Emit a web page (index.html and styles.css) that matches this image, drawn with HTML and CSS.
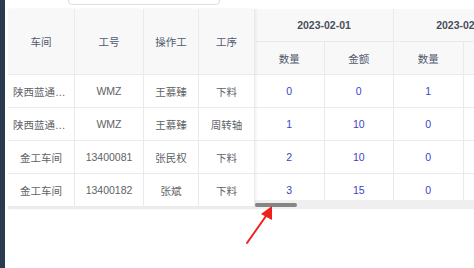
FILE: index.html
```html
<!DOCTYPE html>
<html lang="zh-CN">
<head>
    <meta charset="UTF-8">
    <title>车间产量统计</title>
    <link rel="stylesheet" href="styles.css">
</head>
<body>
    <div class="page">
        <aside class="side"></aside>
        <main class="main">
            <div class="toolbar"><div class="search"></div></div>
            <div class="grid">
                <div class="fixed">
                    <table class="tbl">
                        <colgroup><col style="width:67px"><col style="width:69px"><col style="width:55px"><col style="width:55px"></colgroup>
                        <thead>
                            <tr><th class="tall">车间</th><th class="tall">工号</th><th class="tall">操作工</th><th class="tall">工序</th></tr>
                        </thead>
                        <tbody>
                            <tr><td class="ellipsis">陕西蓝通运输</td><td>WMZ</td><td>王慕臻</td><td>下料</td></tr>
                            <tr><td class="ellipsis">陕西蓝通运输</td><td>WMZ</td><td>王慕臻</td><td>周转轴</td></tr>
                            <tr><td>金工车间</td><td>13400081</td><td>张民权</td><td>下料</td></tr>
                            <tr><td>金工车间</td><td>13400182</td><td>张斌</td><td>下料</td></tr>
                        </tbody>
                    </table>
                </div>
                <div class="scroll">
                    <div class="scroll-body">
                        <table class="tbl wide">
                            <thead>
                                <tr>
                                    <th colspan="2" class="date">2023-02-01</th>
                                    <th colspan="2" class="date">2023-02-02</th>
                                    <th colspan="2" class="date">2023-02-03</th>
                                    <th colspan="2" class="date">2023-02-04</th>
                                    <th colspan="2" class="date">2023-02-05</th>
                                    <th colspan="2" class="date">2023-02-06</th>
                                    <th colspan="2" class="date">2023-02-07</th>
                                    <th colspan="2" class="date">2023-02-08</th>
                                </tr>
                                <tr>
                                    <th>数量</th><th>金额</th><th>数量</th><th>金额</th>
                                    <th>数量</th><th>金额</th><th>数量</th><th>金额</th>
                                    <th>数量</th><th>金额</th><th>数量</th><th>金额</th>
                                    <th>数量</th><th>金额</th><th>数量</th><th>金额</th>
                                </tr>
                            </thead>
                            <tbody>
                                <tr class="num"><td>0</td><td>0</td><td>1</td><td>5</td><td>0</td><td>0</td><td>0</td><td>0</td><td>0</td><td>0</td><td>0</td><td>0</td><td>0</td><td>0</td><td>0</td><td>0</td></tr>
                                <tr class="num"><td>1</td><td>10</td><td>0</td><td>0</td><td>0</td><td>0</td><td>0</td><td>0</td><td>0</td><td>0</td><td>0</td><td>0</td><td>0</td><td>0</td><td>0</td><td>0</td></tr>
                                <tr class="num"><td>2</td><td>10</td><td>0</td><td>0</td><td>0</td><td>0</td><td>0</td><td>0</td><td>0</td><td>0</td><td>0</td><td>0</td><td>0</td><td>0</td><td>0</td><td>0</td></tr>
                                <tr class="num"><td>3</td><td>15</td><td>0</td><td>0</td><td>0</td><td>0</td><td>0</td><td>0</td><td>0</td><td>0</td><td>0</td><td>0</td><td>0</td><td>0</td><td>0</td><td>0</td></tr>
                            </tbody>
                        </table>
                    </div>
                    <div class="scrollbar"><div class="thumb"></div></div>
                </div>
            </div>
            <svg class="arrow" width="40" height="50" viewBox="0 0 40 50">
                <line x1="6" y1="40" x2="25" y2="13" stroke="#f0201a" stroke-width="2" stroke-linecap="round"/>
                <polygon points="31,3 31,17 20,11" fill="#f0201a"/>
            </svg>
        </main>
    </div>
</body>
</html>
```

FILE: styles.css
```css
body {
    margin: 0;
    font-family: "Liberation Sans", "Noto Sans CJK SC", sans-serif;
    font-size: 10.5px;
    color: #606266;
    background-color: #fff;
}
.page {
    display: flex;
    height: 268px;
    overflow: hidden;
}
.side {
    width: 5px;
    flex-shrink: 0;
    background-color: #2a3a4f;
}
.main {
    position: relative;
    flex: 1;
    min-width: 0;
    padding-left: 3px;
}
.toolbar {
    height: 9px;
    overflow: hidden;
    padding-left: 60px;
}
.search {
    width: 150px;
    height: 30px;
    margin-top: -27px;
    border: 1px solid #dcdee2;
    border-radius: 4px;
}
.grid {
    display: flex;
}
.fixed {
    width: 246px;
    flex-shrink: 0;
    height: 198px;
    border-bottom: 2px solid #ececec;
    border-right: 1px solid #e8eaec;
    box-shadow: 1px 0 3px rgba(0, 0, 0, 0.06);
    position: relative;
    z-index: 1;
}
.tbl {
    border-collapse: separate;
    border-spacing: 0;
    table-layout: fixed;
    width: 246px;
}
.tbl th, .tbl td {
    box-sizing: border-box;
    height: 33px;
    padding: 0 5px;
    text-align: center;
    border-bottom: 1px solid #e8eaec;
    border-right: 1px solid #e8eaec;
    white-space: nowrap;
    overflow: hidden;
}
.tbl th {
    background-color: #f8f8f9;
    font-weight: normal;
    color: #515a6e;
}
.fixed .tbl th:last-child, .fixed .tbl td:last-child {
    border-right: none;
}
.tbl th.tall {
    height: 66px;
}
.tbl td.ellipsis {
    text-overflow: ellipsis;
    text-align: left;
}
.scroll {
    width: 220px;
    overflow: hidden;
}
.scroll-body {
    height: 191px;
    overflow: hidden;
}
.wide {
    width: 1112px;
}
.wide th.date {
    font-weight: bold;
    color: #4a4f5a;
}
.tbl tr.num td {
    color: #4141c8;
}
.scrollbar {
    height: 9px;
    box-sizing: border-box;
    padding-top: 3px;
    background-color: #efefef;
}
.thumb {
    width: 42px;
    height: 4px;
    border-radius: 2px;
    background-color: #858585;
}
.arrow {
    position: absolute;
    left: 236px;
    top: 203px;
}
```
